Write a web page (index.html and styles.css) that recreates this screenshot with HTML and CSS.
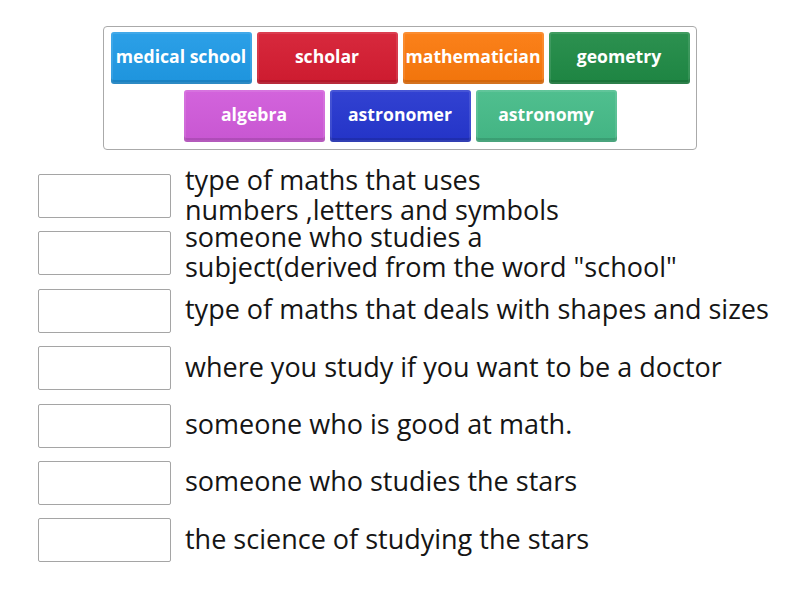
FILE: index.html
```html
<!DOCTYPE html>
<html>
<head>
<meta charset="utf-8">
<link rel="stylesheet" href="styles.css">
</head>
<body>
<div class="bank">
  <div class="tile c-blue">medical school</div>
  <div class="tile c-red">scholar</div>
  <div class="tile c-orange">mathematician</div>
  <div class="tile c-green">geometry</div>
  <div class="tile c-pink">algebra</div>
  <div class="tile c-navy">astronomer</div>
  <div class="tile c-teal">astronomy</div>
</div>
<div class="list">
  <div class="row"><div class="slot"></div><div class="clue">type of maths that uses<br>numbers ,letters and symbols</div></div>
  <div class="row"><div class="slot"></div><div class="clue">someone who studies a<br>subject(derived from the word "school"</div></div>
  <div class="row"><div class="slot"></div><div class="clue">type of maths that deals with shapes and sizes</div></div>
  <div class="row"><div class="slot"></div><div class="clue">where you study if you want to be a doctor</div></div>
  <div class="row"><div class="slot"></div><div class="clue">someone who is good at math.</div></div>
  <div class="row"><div class="slot"></div><div class="clue">someone who studies the stars</div></div>
  <div class="row"><div class="slot"></div><div class="clue">the science of studying the stars</div></div>
</div>
</body>
</html>
```
FILE: styles.css
```css
html, body {
  margin: 0;
  padding: 0;
  background: #fff;
}
body {
  font-family: "Open Sans", "DejaVu Sans", sans-serif;
  padding-top: 26px;
}
.bank {
  box-sizing: border-box;
  width: 594px;
  margin: 0 auto;
  border: 1px solid #aaaaaa;
  border-radius: 4px;
  padding: 5px 6px 7px;
  display: flex;
  flex-wrap: wrap;
  justify-content: center;
  gap: 6px 5px;
}
.tile {
  width: 141px;
  height: 52px;
  box-sizing: border-box;
  border-radius: 3px;
  color: #fff;
  font-weight: 700;
  font-size: 17.6px;
  display: flex;
  align-items: center;
  justify-content: center;
  padding-bottom: 4px;
  box-shadow: inset 0 -4px 0 rgba(0,0,0,0.12), inset 0 0 0 2px rgba(255,255,255,0.10);
  background-image: linear-gradient(rgba(255,255,255,0.06), rgba(0,0,0,0.04));
  white-space: nowrap;
}
.c-blue { background-color: #1f9ae6; }
.c-red { background-color: #d51c31; }
.c-orange { background-color: #fb790c; }
.c-green { background-color: #1f8a45; }
.c-pink { background-color: #d05ada; }
.c-navy { background-color: #2536cf; }
.c-teal { background-color: #45bb88; }

.list {
  margin: 24px 0 0 38px;
  display: flex;
  flex-direction: column;
  gap: 13.4px;
}
.row {
  display: flex;
  align-items: center;
  height: 44px;
}
.slot {
  box-sizing: border-box;
  width: 133px;
  height: 44px;
  border: 1px solid #a5a5a5;
  border-radius: 2px;
  flex: none;
}
.clue {
  margin-left: 14px;
  font-size: 27px;
  line-height: 30px;
  color: #151515;
  white-space: nowrap;
  padding-bottom: 3px;
}
```
